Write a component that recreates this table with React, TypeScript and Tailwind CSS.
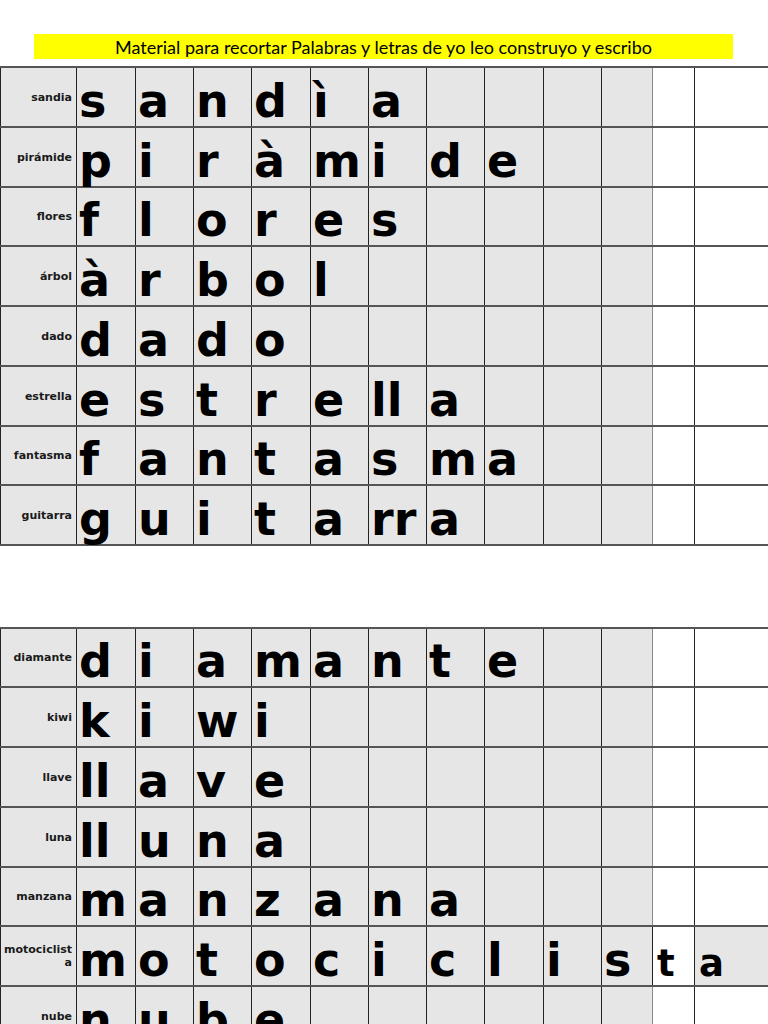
import React from "react";

type Row = { label: string; letters: string[]; h: string; special?: boolean };

const rows1: Row[] = [
  { label: "sandia", letters: ["s", "a", "n", "d", "ì", "a"], h: "h-[60px]" },
  { label: "pirámide", letters: ["p", "i", "r", "à", "m", "i", "d", "e"], h: "h-[60px]" },
  { label: "flores", letters: ["f", "l", "o", "r", "e", "s"], h: "h-[59px]" },
  { label: "árbol", letters: ["à", "r", "b", "o", "l"], h: "h-[60px]" },
  { label: "dado", letters: ["d", "a", "d", "o"], h: "h-[60px]" },
  { label: "estrella", letters: ["e", "s", "t", "r", "e", "ll", "a"], h: "h-[60px]" },
  { label: "fantasma", letters: ["f", "a", "n", "t", "a", "s", "m", "a"], h: "h-[59px]" },
  { label: "guitarra", letters: ["g", "u", "i", "t", "a", "rr", "a"], h: "h-[60px]" },
];

const rows2: Row[] = [
  { label: "diamante", letters: ["d", "i", "a", "m", "a", "n", "t", "e"], h: "h-[59px]" },
  { label: "kiwi", letters: ["k", "i", "w", "i"], h: "h-[60px]" },
  { label: "llave", letters: ["ll", "a", "v", "e"], h: "h-[60px]" },
  { label: "luna", letters: ["ll", "u", "n", "a"], h: "h-[60px]" },
  { label: "manzana", letters: ["m", "a", "n", "z", "a", "n", "a"], h: "h-[59px]" },
  {
    label: "motociclista",
    letters: ["m", "o", "t", "o", "c", "i", "c", "l", "i", "s", "t", "a"],
    h: "h-[60px]",
    special: true,
  },
  { label: "nube", letters: ["n", "u", "b", "e"], h: "h-[60px]" },
];

const widths = [
  "w-[59px]",
  "w-[58px]",
  "w-[58px]",
  "w-[59px]",
  "w-[58px]",
  "w-[58px]",
  "w-[58px]",
  "w-[59px]",
  "w-[58px]",
  "w-[51px]",
  "w-[42px]",
];

function Cell({ idx, text, special }: { idx: number; text?: string; special?: boolean }) {
  const isLast = idx === 11;
  const width = isLast ? "flex-1" : widths[idx];
  let bg = idx <= 9 ? "bg-[#e6e6e6]" : "bg-white";
  if (special && idx === 11) bg = "bg-[#e6e6e6]";
  let borderCol = "border-[#222]";
  if (idx === 10 && !special) borderCol = "border-[#8a8a8a]";
  const small = special && idx >= 10;
  return (
    <div
      className={`${width} ${bg} ${borderCol} h-full shrink-0 border-l flex items-end pl-[2px] pb-[2px] overflow-visible whitespace-nowrap`}
    >
      {text ? (
        small ? (
          <span className="font-['DejaVu_Sans',sans-serif] font-bold text-[37px] leading-none text-black pl-[2px] pb-[1px]">
            {text}
          </span>
        ) : (
          <span className="font-['DejaVu_Sans',sans-serif] font-bold text-[46px] leading-none text-black">
            {text}
          </span>
        )
      ) : null}
    </div>
  );
}

function Table({ rows, mt }: { rows: Row[]; mt: string }) {
  return (
    <div className={`${mt} w-[768px] border-t-2 border-[#555]`}>
      {rows.map((r) => (
        <div key={r.label} className={`${r.h} flex border-b-2 border-[#555]`}>
          <div className="w-[76px] shrink-0 h-full bg-[#e6e6e6] border-l border-[#222] flex items-center justify-end pr-[4px] pl-[1px]">
            <span className="font-['DejaVu_Sans',sans-serif] font-bold text-[11px] leading-[13px] text-[#1a1a1a] text-right break-all">
              {r.label}
            </span>
          </div>
          {Array.from({ length: 12 }).map((_, i) => (
            <Cell key={i} idx={i} text={r.letters[i]} special={r.special} />
          ))}
        </div>
      ))}
    </div>
  );
}

export default function App() {
  return (
    <div className="w-[768px] h-[1024px] overflow-hidden bg-white">
      <div className="pt-[34px] pl-[34px]">
        <div className="w-[699px] h-[25px] bg-[#ffff00] flex items-center justify-center">
          <span className="font-['Lato',sans-serif] text-[18px] leading-none text-black">
            Material para recortar Palabras y letras de yo leo construyo y escribo
          </span>
        </div>
      </div>
      <Table rows={rows1} mt="mt-[7px]" />
      <Table rows={rows2} mt="mt-[81px]" />
    </div>
  );
}
